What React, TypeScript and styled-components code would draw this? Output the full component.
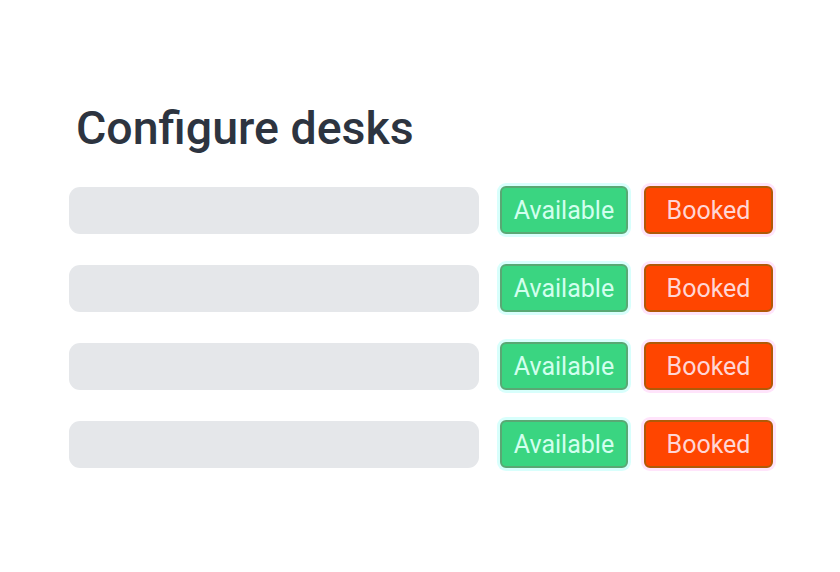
import styled, { createGlobalStyle } from "styled-components";

const Global = createGlobalStyle`
body {
  margin: 0;
  background: #ffffff;
  font-family: Roboto, "Liberation Sans", sans-serif;
}
`;

const Page = styled.div`
width: 840px;
height: 572px;
box-sizing: border-box;
padding: 96px 0 0 69px;
`;

const Title = styled.h1`
margin: 0 0 26px 7px;
font-size: 46.5px;
font-weight: 500;
line-height: 64px;
color: #2d3440;
`;

const List = styled.div`
display: flex;
flex-direction: column;
gap: 30px;
`;

const Row = styled.div`
display: flex;
align-items: center;
`;

const Field = styled.div`
width: 410px;
height: 47px;
border-radius: 11px;
background: #e5e7ea;
margin-right: 21px;
`;

const StatusButton = styled.button<{ $kind: "available" | "booked" }>`
box-sizing: border-box;
height: 48px;
width: ${(p) => (p.$kind === "available" ? "128px" : "129px")};
margin-right: ${(p) => (p.$kind === "available" ? "16px" : "0")};
border-radius: 6px;
border: 2px solid ${(p) => (p.$kind === "available" ? "#5aa874" : "#b05a08")};
background: ${(p) => (p.$kind === "available" ? "#3ad581" : "#ff4500")};
color: ${(p) => (p.$kind === "available" ? "#d2ffee" : "#ffd6d6")};
box-shadow: 0 0 0 3px ${(p) => (p.$kind === "available" ? "#d8fffc" : "#ffe4fb")};
font-family: Roboto, "Liberation Sans", sans-serif;
font-size: 25px;
padding: 0;
cursor: pointer;
`;

const desks = [1, 2, 3, 4];

export default function App() {
  return (
    <>
      <Global />
      <Page>
        <Title>Configure desks</Title>
        <List>
          {desks.map((d) => (
            <Row key={d}>
              <Field />
              <StatusButton $kind="available">Available</StatusButton>
              <StatusButton $kind="booked">Booked</StatusButton>
            </Row>
          ))}
        </List>
      </Page>
    </>
  );
}
